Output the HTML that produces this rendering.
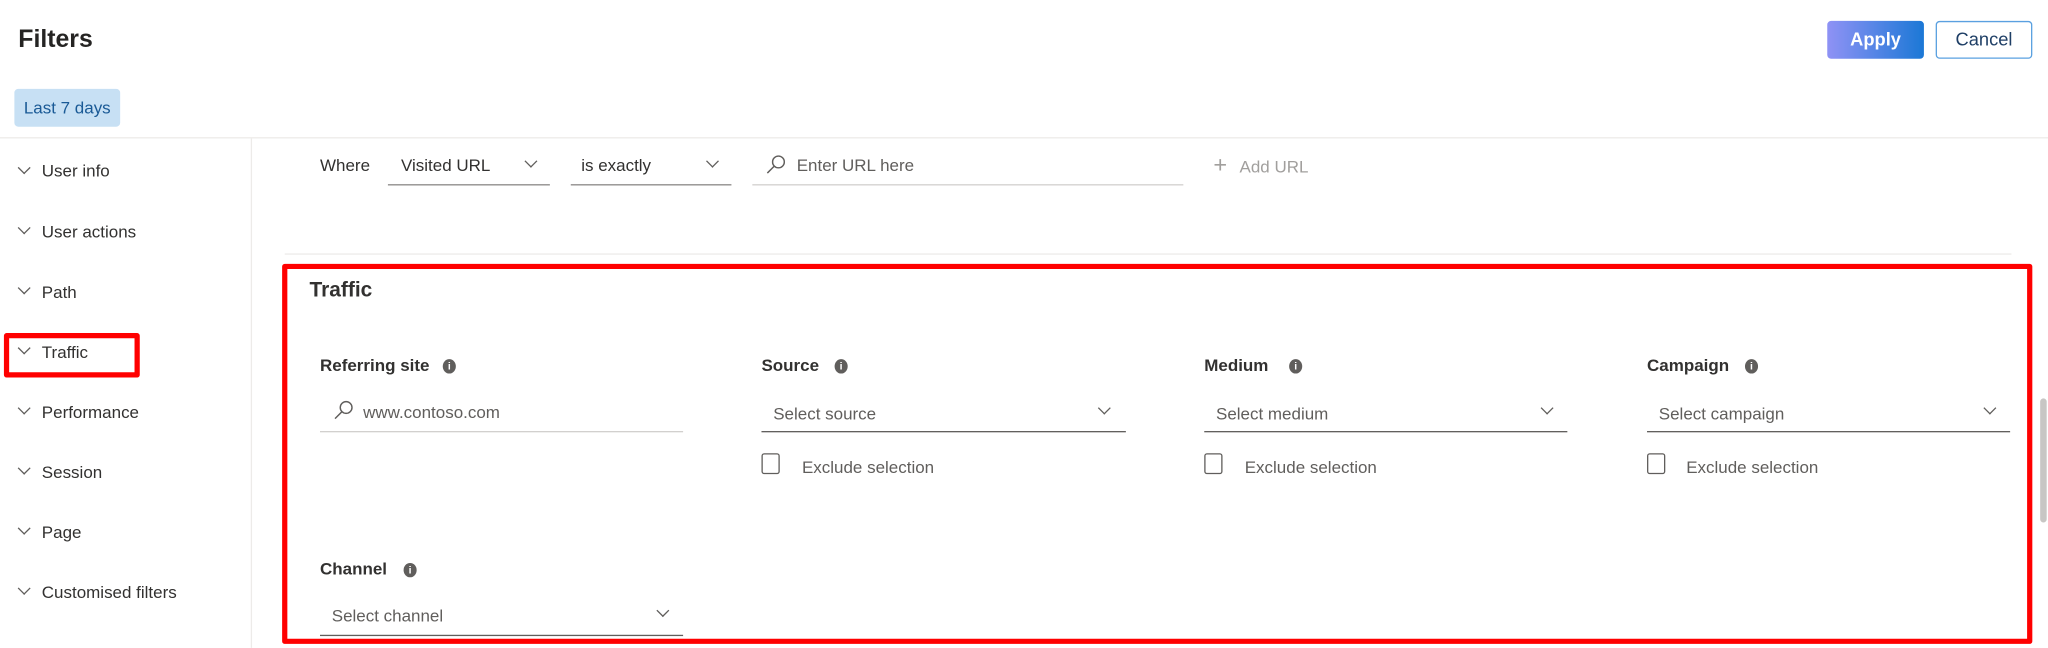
<!DOCTYPE html>
<html><head><meta charset="utf-8"><style>
html,body{margin:0;padding:0;width:2048px;height:648px;overflow:hidden;background:#fff;}
#w{position:absolute;left:0;top:0;width:1568px;height:496px;transform:scale(1.306122);transform-origin:0 0;font-family:"Liberation Sans",sans-serif;color:#323130;}
.a{position:absolute;white-space:nowrap;}
.t{font-size:13px;}
.chev{position:absolute;width:6px;height:6px;border-right:1px solid #605e5c;border-bottom:1px solid #605e5c;transform:rotate(45deg);}
.lbl{font-size:13px;font-weight:bold;color:#323130;}
.info{position:absolute;width:10px;height:11px;border-radius:50%;background:#605e5c;color:#fff;font-size:8px;font-weight:bold;text-align:center;line-height:11px;}
.ul{position:absolute;height:1px;background:#605e5c;}
.ulg{position:absolute;height:1px;background:#d2d0ce;}
.ph{font-size:13px;color:#605e5c;}
.cb{position:absolute;width:12px;height:14px;border:1px solid #605e5c;border-radius:2px;}
</style></head><body><div id="w">
<div class="a" style="left:14px;top:20px;font-size:19px;font-weight:bold;color:#252423">Filters</div>
<div class="a" style="left:1399px;top:16px;width:74px;height:29px;border-radius:3px;background:linear-gradient(90deg,#8f92f5,#1b78d6);color:#fff;font-size:14px;font-weight:bold;text-align:center;line-height:29px">Apply</div>
<div class="a" style="left:1482px;top:16px;width:72px;height:27px;border-radius:3px;border:1px solid #5aa0e0;color:#1f3f66;font-size:14px;text-align:center;line-height:27px">Cancel</div>
<div class="a" style="left:11px;top:68px;width:81px;height:29px;border-radius:3px;background:#c7e0f4;color:#1a5a96;font-size:13px;text-align:center;line-height:29px">Last 7 days</div>
<div class="a" style="left:0;top:105px;width:1568px;height:1px;background:#edebe9"></div>
<div class="a" style="left:192px;top:106px;width:1px;height:390px;background:#edebe9"></div>

<div class="chev" style="left:15px;top:125px"></div><div class="a t" style="left:32px;top:123px">User info</div>
<div class="chev" style="left:15px;top:171px"></div><div class="a t" style="left:32px;top:170px">User actions</div>
<div class="chev" style="left:15px;top:217px"></div><div class="a t" style="left:32px;top:216px">Path</div>
<div class="chev" style="left:15px;top:263px"></div><div class="a t" style="left:32px;top:262px">Traffic</div>
<div class="a" style="left:3px;top:255px;width:96px;height:26px;border:4px solid #f00;border-radius:2px"></div>
<div class="chev" style="left:15px;top:309px"></div><div class="a t" style="left:32px;top:308px">Performance</div>
<div class="chev" style="left:15px;top:355px"></div><div class="a t" style="left:32px;top:354px">Session</div>
<div class="chev" style="left:15px;top:401px"></div><div class="a t" style="left:32px;top:400px">Page</div>
<div class="chev" style="left:15px;top:447px"></div><div class="a t" style="left:32px;top:446px">Customised filters</div>

<div class="a t" style="left:245px;top:119px">Where</div>
<div class="a t" style="left:307px;top:119px">Visited URL</div><div class="chev" style="left:403px;top:120px"></div><div class="ul" style="left:297px;top:141px;width:124px;background:#8a8886"></div>
<div class="a t" style="left:445px;top:119px">is exactly</div><div class="chev" style="left:542px;top:120px"></div><div class="ul" style="left:437px;top:141px;width:123px;background:#8a8886"></div>
<svg class="a" style="left:586px;top:118px" width="16" height="16" viewBox="0 0 16 16"><circle cx="10" cy="6" r="4.5" fill="none" stroke="#605e5c" stroke-width="1.1"/><line x1="6.8" y1="9.2" x2="1.5" y2="14.5" stroke="#605e5c" stroke-width="1.1"/></svg>
<div class="a ph" style="left:610px;top:119px">Enter URL here</div><div class="ulg" style="left:576px;top:141px;width:330px"></div>
<div class="a" style="left:929px;top:116px;font-size:18px;color:#a19f9d;font-weight:lighter">+</div><div class="a" style="left:949px;top:120px;font-size:13px;color:#a19f9d">Add URL</div>
<div class="a" style="left:218px;top:194px;width:1322px;height:1px;background:#edebe9"></div>

<div class="a" style="left:216px;top:202px;width:1332px;height:283px;border:4px solid #f00;border-radius:2px"></div>
<div class="a" style="left:237px;top:214px;font-size:16px;font-weight:bold;color:#323130">Traffic</div>

<div class="a lbl" style="left:245px;top:272px">Referring site</div><div class="info" style="left:339px;top:275px">i</div>
<div class="a lbl" style="left:583px;top:272px">Source</div><div class="info" style="left:639px;top:275px">i</div>
<div class="a lbl" style="left:922px;top:272px">Medium</div><div class="info" style="left:987px;top:275px">i</div>
<div class="a lbl" style="left:1261px;top:272px">Campaign</div><div class="info" style="left:1336px;top:275px">i</div>

<svg class="a" style="left:255px;top:306px" width="16" height="16" viewBox="0 0 16 16"><circle cx="10" cy="6" r="4.5" fill="none" stroke="#605e5c" stroke-width="1.1"/><line x1="6.8" y1="9.2" x2="1.5" y2="14.5" stroke="#605e5c" stroke-width="1.1"/></svg>
<div class="a ph" style="left:278px;top:308px">www.contoso.com</div><div class="ulg" style="left:245px;top:330px;width:278px"></div>
<div class="a ph" style="left:592px;top:309px">Select source</div><div class="chev" style="left:842px;top:309px"></div><div class="ul" style="left:583px;top:330px;width:279px"></div>
<div class="a ph" style="left:931px;top:309px">Select medium</div><div class="chev" style="left:1181px;top:309px"></div><div class="ul" style="left:922px;top:330px;width:278px"></div>
<div class="a ph" style="left:1270px;top:309px">Select campaign</div><div class="chev" style="left:1520px;top:309px"></div><div class="ul" style="left:1261px;top:330px;width:278px"></div>

<div class="cb" style="left:583px;top:347px"></div><div class="a ph" style="left:614px;top:350px">Exclude selection</div>
<div class="cb" style="left:922px;top:347px"></div><div class="a ph" style="left:953px;top:350px">Exclude selection</div>
<div class="cb" style="left:1261px;top:347px"></div><div class="a ph" style="left:1291px;top:350px">Exclude selection</div>

<div class="a lbl" style="left:245px;top:428px">Channel</div><div class="info" style="left:309px;top:431px">i</div>
<div class="a ph" style="left:254px;top:464px">Select channel</div><div class="chev" style="left:504px;top:464px"></div><div class="ul" style="left:245px;top:486px;width:278px"></div>

<div class="a" style="left:1562px;top:305px;width:5px;height:95px;border-radius:3px;background:#c8c6c4"></div>
</div></body></html>
